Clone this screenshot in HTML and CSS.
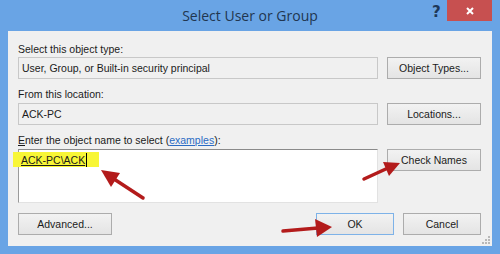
FILE: index.html
```html
<!DOCTYPE html>
<html lang="en">

<head>
    <meta charset="UTF-8">
    <title>Select User or Group</title>
    <link rel="stylesheet" href="styles.css">
</head>

<body>

    <div class="window">
        <div class="titlebar">
            <span class="title">Select User or Group</span>
            <span class="help">?</span>
            <span class="close">
                <svg width="8" height="8" viewBox="0 0 8 8">
                    <path d="M1 1 L7 7 M7 1 L1 7" stroke="#fff" stroke-width="2" />
                </svg>
            </span>
        </div>

        <div class="client">
            <div class="form">
                <div class="label">Select this object type:</div>
                <div class="field">User, Group, or Built-in security principal</div>
                <button class="btn">Object Types...</button>

                <div class="label">From this location:</div>
                <div class="field">ACK-PC</div>
                <button class="btn">Locations...</button>

                <div class="label label-names"><u>E</u>nter the object name to select (<a href="#">examples</a>):</div>
                <div class="names">
                    <span class="entry"><span class="entry-text">ACK-PC\ACK</span><span class="caret"></span></span>
                </div>
                <button class="btn">Check Names</button>
            </div>

            <div class="footer">
                <button class="btn">Advanced...</button>
                <div class="footer-right">
                    <button class="btn btn-default">OK</button>
                    <button class="btn btn-cancel">Cancel</button>
                </div>
            </div>

            <!-- resize grip -->
            <svg class="grip" width="9" height="9" viewBox="0 0 9 9">
                <rect x="6" y="0" width="2" height="2" fill="#b8b8b8" />
                <rect x="3" y="3" width="2" height="2" fill="#b8b8b8" />
                <rect x="6" y="3" width="2" height="2" fill="#b8b8b8" />
                <rect x="0" y="6" width="2" height="2" fill="#b8b8b8" />
                <rect x="3" y="6" width="2" height="2" fill="#b8b8b8" />
                <rect x="6" y="6" width="2" height="2" fill="#b8b8b8" />
            </svg>
        </div>

        <!-- red annotation arrows drawn over the dialog -->
        <svg class="arrows" width="500" height="254" viewBox="0 0 500 254">
            <g stroke="#b31b1b" stroke-width="3.5" stroke-linecap="round">
                <line x1="143" y1="198" x2="114" y2="179" />
                <line x1="364" y1="179" x2="388" y2="168" />
                <line x1="283" y1="231" x2="318" y2="228" />
            </g>
            <g fill="#b31b1b">
                <polygon points="101,170 120,173 111,187" />
                <polygon points="400,163 383,162 389,176" />
                <polygon points="332,227 315,219 317,237" />
            </g>
        </svg>
    </div>

</body>

</html>
```

FILE: styles.css
```css
body {
    margin: 0;
    font-family: "Liberation Sans", Arial, sans-serif;
    font-size: 10.5px;
    color: #1b1b1b;
}

.window {
    position: relative;
    width: 500px;
    height: 254px;
    background: #69a4e5;
    display: flex;
    flex-direction: column;
    box-sizing: border-box;
}

.titlebar {
    position: relative;
    height: 31px;
    display: flex;
    justify-content: center;
    align-items: center;
}

.title {
    font-family: "Open Sans", "Liberation Sans", sans-serif;
    font-size: 14px;
    color: #213650;
    margin-top: -1px;
}

.help {
    position: absolute;
    left: 432px;
    top: 3px;
    font-family: "DejaVu Sans", sans-serif;
    font-weight: bold;
    font-size: 15px;
    color: #1e3858;
}

.close {
    position: absolute;
    right: 8px;
    top: 0;
    width: 45px;
    height: 21px;
    background: #c75050;
    display: flex;
    justify-content: center;
    align-items: center;
}

.client {
    position: relative;
    flex: 1;
    margin: 0 8px 8px 8px;
    background: #f0f0f0;
    padding: 11px 11px 0 10px;
}

.form {
    display: grid;
    grid-template-columns: 360px 94px;
    column-gap: 9px;
    align-items: start;
}

.label {
    grid-column: 1 / 3;
    line-height: 14px;
    margin-bottom: 1px;
}

.label ~ .label {
    margin-top: 8px;
    margin-bottom: 2px;
}

.label-names {
    margin-top: 9px;
    margin-bottom: 4px;
}

.label a {
    color: #2a6bc4;
}

.field {
    height: 20px;
    line-height: 20px;
    border: 1px solid #c8c8c8;
    background: #f0f0f0;
    padding-left: 3px;
    white-space: nowrap;
}

.btn {
    height: 22px;
    margin: 0;
    padding: 0;
    font-family: "Liberation Sans", Arial, sans-serif;
    font-size: 10.5px;
    color: #1b1b1b;
    border: 1px solid #acacac;
    background: linear-gradient(#f2f2f2, #e4e4e4);
    box-sizing: border-box;
}

.form .btn {
    width: 94px;
}

.names {
    height: 54px;
    box-sizing: border-box;
    background: #fff;
    border: 1px solid #e2e2e2;
    border-top-color: #8a8a8a;
    border-left-color: #9a9a9a;
    padding-top: 2px;
}

.entry {
    display: inline-flex;
    align-items: center;
    height: 15px;
    margin-left: -6px;
    padding: 0 12px 0 8px;
    background: #f8f636;
}

.entry-text {
    text-decoration: underline;
    color: #1b1b1b;
}

.caret {
    display: inline-block;
    width: 1px;
    height: 14px;
    margin-left: 1px;
    background: #000;
}

.footer {
    display: flex;
    justify-content: space-between;
    margin-top: 10px;
}

.footer .btn {
    width: 94px;
}

.footer-right {
    display: flex;
    gap: 9px;
}

.footer-right .btn {
    width: 78px;
}

.btn-default {
    border-color: #7db2e8;
}

.grip {
    position: absolute;
    right: 1px;
    bottom: 1px;
}

.arrows {
    position: absolute;
    left: 0;
    top: 0;
    pointer-events: none;
}
```
